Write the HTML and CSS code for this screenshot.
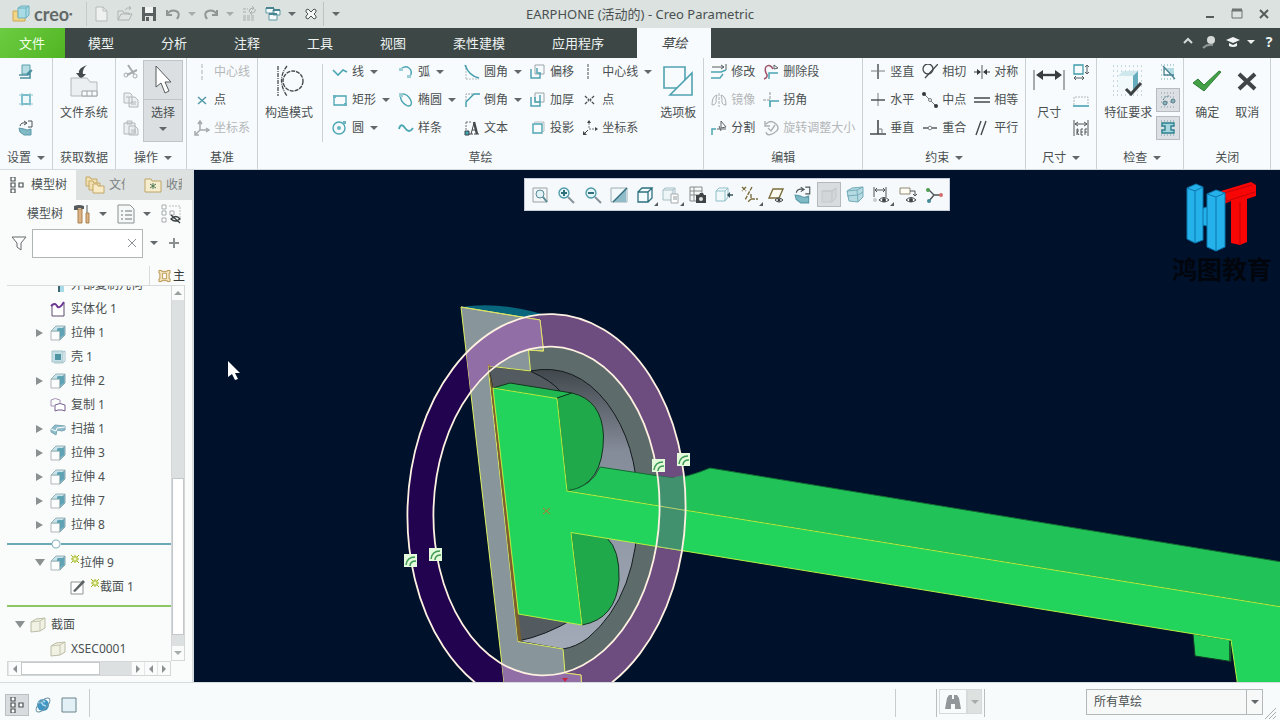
FILE: index.html
```html
<!DOCTYPE html>
<html lang="zh-CN">
<head>
    <meta charset="UTF-8">
    <meta name="viewport" content="width=device-width, initial-scale=1.0">
    <title>EARPHONE (活动的) - Creo Parametric</title>
    <link rel="stylesheet" href="styles.css">
</head>
<body>
    <!-- icon sprite -->
    <svg class="sprite" aria-hidden="true">
        <symbol id="i-new" viewBox="0 0 16 16"><path d="M3 1h7l4 4v10H3z" fill="#eef1f0" stroke="#b5bbb9"/><path d="M10 1v4h4" fill="none" stroke="#b5bbb9"/></symbol>
        <symbol id="i-open" viewBox="0 0 16 16"><path d="M1 14V5h5l1 2h5v2M1 14l3-6h11l-3 6z" fill="#dfe3e1" stroke="#adb3b1"/><path d="M8 4q2-3 6-2M12 0l2 2-2 2" fill="none" stroke="#adb3b1"/></symbol>
        <symbol id="i-save" viewBox="0 0 16 16"><path d="M1 1h14v14H1z" fill="#59605f"/><path d="M4 1h8v6H4z" fill="#f2f4f3"/><path d="M4 10h8v5H4z" fill="#dfe3e1"/><path d="M5 11h3v4H5z" fill="#59605f"/></symbol>
        <symbol id="i-undo" viewBox="0 0 16 16"><path d="M2 4v5h5M2 8q4-5 9-3t1 8" fill="none" stroke="#8f9694" stroke-width="2"/></symbol>
        <symbol id="i-redo" viewBox="0 0 16 16"><path d="M14 4v5H9M14 8q-4-5-9-3t-1 8" fill="none" stroke="#8f9694" stroke-width="2"/></symbol>
        <symbol id="i-regen" viewBox="0 0 16 16"><path d="M2 3h5M2 6h4M2 10h11M2 12h11M2 14h11" stroke="#a9afad" stroke-dasharray="3 1"/><path d="M8 6q0-4 4-4M11 0l2 2-2 2M14 3q1 4-4 4M11 5L9 7l2 2" fill="none" stroke="#a9afad"/></symbol>
        <symbol id="i-windows" viewBox="0 0 16 16"><path d="M1 2h8v5H1zM8 4h7v5H8zM4 8h8v6H4z" fill="#f4fafb" stroke="#5f99a4"/><path d="M1 2h8M8 4h7M4 8h8" stroke="#4a8491" stroke-width="2"/></symbol>
        <symbol id="i-closewin" viewBox="0 0 16 16"><path d="M3 4l2-1 3 3 3-3 2 1v2l-2 2 2 2v2l-2 1-3-3-3 3-2-1v-2l2-2-2-2z" fill="#f4f6f5" stroke="#4d5453"/></symbol>

        <symbol id="i-setup" viewBox="0 0 16 16"><path d="M4 1h8v9H4z" fill="#b7dce4" stroke="#5b9fad"/><path d="M1 11h9l4-5M2 14h10V9M13 6l-4 4" fill="none" stroke="#4b90a0" stroke-width="1.6"/></symbol>
        <symbol id="i-refs" viewBox="0 0 16 16"><path d="M4 3h8v9H4z" fill="#eef8fa" stroke="#45a4b5" stroke-width="1.4"/><path d="M1 3h14M1 12h14M4 1v13M12 1v13" stroke="#8fc6d1" stroke-dasharray="3 1"/></symbol>
        <symbol id="i-orient" viewBox="0 0 16 16"><path d="M2 6q1-4 6-3M6 1l3 2-3 2M10 1h4v6h-4" fill="none" stroke="#4b5556"/><path d="M1 8l5 1q3 2 7 0v6H6l-4-3z" fill="#7fb9c6" stroke="#5b9aa8"/></symbol>
        <symbol id="i-filesys" viewBox="0 0 32 32"><path d="M19 0q-9 3-8 8H8l5 6 5-5h-3q-1-5 4-9z" fill="#444b4b"/><path d="M3 13h16l3 4h7v14H3z" fill="#eceff1" stroke="#b1b7ba"/><path d="M14 26h15v5H14z" fill="#f8fafb" stroke="#9aa1a5"/><path d="M19 26v5M24 26v5" stroke="#9aa1a5"/></symbol>
        <symbol id="i-cut" viewBox="0 0 16 16"><path d="M5 1l6 9M14 6L4 11" stroke="#a6abad" stroke-width="2"/><circle cx="12" cy="12" r="2" fill="none" stroke="#a6abad"/><circle cx="3" cy="11" r="2" fill="none" stroke="#a6abad"/></symbol>
        <symbol id="i-copy" viewBox="0 0 16 16"><path d="M1 1h6l2 2v8H1zM6 5h6l3 3v7H6z" fill="#eceef0" stroke="#b3b8ba"/><path d="M8 10h5M8 12h5M3 5h3" stroke="#b3b8ba"/></symbol>
        <symbol id="i-paste" viewBox="0 0 16 16"><path d="M1 3h11v11H1zM4 1h5v3H4zM6 6h6l3 3v6H6z" fill="#eceef0" stroke="#b3b8ba"/><path d="M8 10h5M8 12h5" stroke="#b3b8ba"/></symbol>
        <symbol id="i-cursor" viewBox="0 0 16 30"><path d="M1 1v21l5-4 4 10 4-2-4-9h6z" fill="#fff" stroke="#555b5c"/></symbol>
        <symbol id="i-axis-d" viewBox="0 0 16 16"><path d="M8 0v16" stroke="#aeb3b5" stroke-dasharray="4 2"/></symbol>
        <symbol id="i-axis" viewBox="0 0 16 16"><path d="M6 0v16" stroke="#4a5051" stroke-dasharray="3 1"/></symbol>
        <symbol id="i-pt-teal" viewBox="0 0 16 16"><path d="M4 5l8 7M12 5l-8 7" stroke="#4f9aa8" stroke-width="1.5"/></symbol>
        <symbol id="i-pt" viewBox="0 0 16 16"><path d="M3 4l4 4M12 4L8 8M3 12l4-4M12 12L8 8" stroke="#4a5051" stroke-width="1.4" stroke-dasharray="3 1"/></symbol>
        <symbol id="i-csys-d" viewBox="0 0 16 16"><path d="M6 2v8h9M6 10l-4 4M4 4l2-3 2 3M12 8l3 2-3 2M1 11v4h4" fill="none" stroke="#a6abad" stroke-width="1.5"/></symbol>
        <symbol id="i-csys" viewBox="0 0 16 16"><path d="M7 3v6h6" fill="none" stroke="#70777a" stroke-dasharray="2 1"/><path d="M6 10l-4 4" stroke="#3e4445"/><path d="M5 3l2-3 2 3zM13 7l3 2-3 2zM1 11v4h4z" fill="#3e4445"/></symbol>
        <symbol id="i-constr" viewBox="0 0 32 32"><path d="M5 1v30M14 1Q3 15 14 31" fill="none" stroke="#454b4c" stroke-width="1.3" stroke-dasharray="4 1 1 1"/><circle cx="20" cy="16" r="10" fill="none" stroke="#454b4c" stroke-width="1.4" stroke-dasharray="4 1"/></symbol>
        <symbol id="i-line" viewBox="0 0 16 16"><path d="M1 6l5 5 5-5 4 2" fill="none" stroke="#4aa5b3" stroke-width="1.6"/></symbol>
        <symbol id="i-rect" viewBox="0 0 16 16"><path d="M2 4h12v9H2z" fill="none" stroke="#4aa5b3" stroke-width="1.3"/><path d="M1 3h3v3H1zM12 11h3v3h-3z" fill="#6bb5c1"/></symbol>
        <symbol id="i-circle" viewBox="0 0 16 16"><circle cx="7" cy="8" r="6" fill="none" stroke="#4aa5b3" stroke-width="1.4"/><circle cx="7" cy="8" r="2" fill="#6bb5c1"/><path d="M11 1h3v3h-3z" fill="#6bb5c1"/></symbol>
        <symbol id="i-arc" viewBox="0 0 16 16"><path d="M3 5q4-4 8-1t1 9" fill="none" stroke="#4aa5b3" stroke-width="1.4"/><path d="M1 4h4v3H1zM9 11h4v3H9z" fill="#9dced6"/></symbol>
        <symbol id="i-ellipse" viewBox="0 0 16 16"><ellipse cx="8" cy="8" rx="4" ry="7" transform="rotate(-40 8 8)" fill="none" stroke="#4aa5b3" stroke-width="1.4"/><path d="M1 1h4v4H1z" fill="#9dced6"/></symbol>
        <symbol id="i-spline" viewBox="0 0 16 16"><path d="M1 9q2-7 6-1t8 0" fill="none" stroke="#4aa5b3" stroke-width="1.8"/></symbol>
        <symbol id="i-fillet" viewBox="0 0 16 16"><path d="M2 1v14M2 15h13" stroke="#b3bcbf" stroke-dasharray="2 1"/><path d="M1 1q4 11 14 13" fill="none" stroke="#3f9bab" stroke-width="1.5"/></symbol>
        <symbol id="i-chamfer" viewBox="0 0 16 16"><path d="M2 9V2h7" fill="none" stroke="#9aa5a8" stroke-dasharray="2 1"/><path d="M2 15V10l8-8h6" fill="none" stroke="#3f9bab" stroke-width="1.4"/></symbol>
        <symbol id="i-text" viewBox="0 0 16 16"><path d="M2 2v9M2 2h6" fill="none" stroke="#6d7577" stroke-dasharray="2 1"/><path d="M1 11h4v4H1z" fill="#4aa5b3" stroke="#31444a"/><path d="M5 14h4M10 14h5M7 14l3-11M8 10h5" fill="none" stroke="#44494a"/><path d="M10 2l3 12" fill="none" stroke="#44494a" stroke-width="2.4"/></symbol>
        <symbol id="i-offset" viewBox="0 0 16 16"><path d="M5 1h9v9H5z" fill="none" stroke="#9aa5a8"/><path d="M1 5v9h9V9M7 4v5h4" fill="none" stroke="#4fa3b1" stroke-width="1.5"/></symbol>
        <symbol id="i-thicken" viewBox="0 0 16 16"><path d="M5 1h9v9H5z" fill="none" stroke="#9aa5a8"/><path d="M1 5v9h9V9M5 5v5h5V3" fill="none" stroke="#4fa3b1" stroke-width="1.5"/></symbol>
        <symbol id="i-project" viewBox="0 0 16 16"><path d="M3 4h9v9H3z" fill="none" stroke="#4aa5b3" stroke-width="1.4"/><path d="M3 4l2-2h9v9l-2 2M12 4l2-2" fill="none" stroke="#b6bfc2"/></symbol>
        <symbol id="i-palette" viewBox="0 0 32 32"><path d="M2 2h21v21H2z" fill="none" stroke="#4fa3b1" stroke-width="1.6"/><path d="M30 8v22H8z" fill="#f8fbfd" stroke="#4fa3b1" stroke-width="1.6"/></symbol>
        <symbol id="i-modify" viewBox="0 0 16 16"><path d="M1 3h12M10 1l3 2-3 2M15 0v6" fill="none" stroke="#555c5e"/><path d="M0 8h10l5-2M0 14h9l3-4" fill="none" stroke="#4aa5b3" stroke-width="1.4"/></symbol>
        <symbol id="i-mirror" viewBox="0 0 16 16"><path d="M8 1v14" stroke="#aab0b2" stroke-dasharray="3 1"/><path d="M6 3Q1 4 1 13q5 0 4-6zM10 3q5 1 5 10-5 0-4-6z" fill="none" stroke="#aab0b2"/></symbol>
        <symbol id="i-divide" viewBox="0 0 16 16"><path d="M1 15V9h4" fill="none" stroke="#4aa5b3" stroke-width="1.5"/><path d="M6 9h9M10 8V1l5 6zM8 6l2 5" fill="none" stroke="#5b6264"/></symbol>
        <symbol id="i-delseg" viewBox="0 0 16 16"><path d="M1 15q5-2 2-6-2-5 1-7t6 3" fill="none" stroke="#a0566a" stroke-width="1.5"/><path d="M6 15V9h9" fill="none" stroke="#4aa5b3" stroke-width="1.5"/><path d="M11 1l4 3-4 1z" fill="none" stroke="#5b6264"/></symbol>
        <symbol id="i-corner" viewBox="0 0 16 16"><path d="M0 8h7M7 0v8" stroke="#8d9597" stroke-dasharray="3 1"/><path d="M7 15V9h9" fill="none" stroke="#4aa5b3" stroke-width="1.7"/></symbol>
        <symbol id="i-rotate" viewBox="0 0 16 16"><path d="M3 4q5-5 10 0t-2 9-8-1M2 1v5h5M5 8l3 3 4-6" fill="none" stroke="#aab0b2" stroke-width="1.4"/></symbol>
        <symbol id="i-vert" viewBox="0 0 16 16"><path d="M8 0v15" stroke="#444a4b" stroke-width="1.4"/><path d="M1 7h14" stroke="#777e80"/></symbol>
        <symbol id="i-horiz" viewBox="0 0 16 16"><path d="M8 1v13" stroke="#777e80"/><path d="M1 8h14" stroke="#444a4b" stroke-width="1.4"/></symbol>
        <symbol id="i-perp" viewBox="0 0 16 16"><path d="M8 0v14M0 14h16" stroke="#444a4b" stroke-width="1.6"/><path d="M8 9h4v5" fill="none" stroke="#777e80"/></symbol>
        <symbol id="i-tangent" viewBox="0 0 16 16"><circle cx="6" cy="5" r="5" fill="none" stroke="#444a4b" stroke-width="1.3"/><path d="M3 14L16 0" stroke="#444a4b" stroke-width="1.3"/></symbol>
        <symbol id="i-mid" viewBox="0 0 16 16"><path d="M2 2l12 12" stroke="#777e80"/><circle cx="2" cy="2" r="2" fill="#33393a"/><circle cx="14" cy="14" r="2" fill="#33393a"/><circle cx="8" cy="8" r="1.5" fill="#fff" stroke="#777e80"/></symbol>
        <symbol id="i-coin" viewBox="0 0 16 16"><path d="M1 8h5M10 8h5" stroke="#555c5e" stroke-width="1.3"/><circle cx="8" cy="8" r="1.8" fill="#fff" stroke="#777e80"/></symbol>
        <symbol id="i-sym" viewBox="0 0 16 16"><path d="M8 1v14" stroke="#555c5e"/><path d="M0 8h3M13 8h3" stroke="#33393a"/><path d="M3 5l4 3-4 3zM13 5L9 8l4 3z" fill="#33393a"/></symbol>
        <symbol id="i-equal" viewBox="0 0 16 16"><path d="M0 6h16M0 10h16" stroke="#444a4b" stroke-width="1.4"/></symbol>
        <symbol id="i-para" viewBox="0 0 16 16"><path d="M2 15L7 1M7 15l5-14" stroke="#444a4b" stroke-width="1.4"/></symbol>
        <symbol id="i-dim" viewBox="0 0 32 32"><path d="M1 5v20M31 5v20" stroke="#555c5e"/><path d="M6 10h20" stroke="#383e3f" stroke-width="2.4"/><path d="M3 10l7-5v10zM29 10l-7-5v10z" fill="#383e3f"/></symbol>
        <symbol id="i-perim" viewBox="0 0 16 16"><path d="M1 1h9v9H1z" fill="none" stroke="#3f9bab" stroke-width="1.3"/><path d="M14 1v9M1 14h10M12 3l2-2 2 2M12 8l2 2 2-2M3 12l-2 2 2 2M9 12l2 2-2 2" fill="none" stroke="#555c5e"/></symbol>
        <symbol id="i-base" viewBox="0 0 16 16"><path d="M1 13V5h14v8" fill="none" stroke="#b0b7b9" stroke-dasharray="2 1"/><path d="M0 14h16" stroke="#6bb5c1" stroke-width="2"/></symbol>
        <symbol id="i-ref" viewBox="0 0 16 16"><path d="M1 0v16M15 0v16M2 4h12M5 2L2 4l3 2M11 2l3 2-3 2" fill="none" stroke="#4f5658"/><path d="M4 15V9h1v3H4l2 3M10 9H8v6h2M8 12h2M14 9h-2v6M12 12h2" fill="none" stroke="#4f5658"/></symbol>
        <symbol id="i-featreq" viewBox="0 0 32 32"><path d="M1 1h30M1 6h30M1 11h30M1 16h30M1 21h30M1 26h30M1 30h30" stroke="#93b6bf" stroke-dasharray="1 3"/><path d="M6 11h15v16H6z" fill="#f1f9fb"/><path d="M6 11l5-5h15l-5 5z" fill="#cfe8ee"/><path d="M21 11l5-5v16l-5 5z" fill="#68adbd"/><path d="M14 24l5 5 10-11" fill="none" stroke="#3c4243" stroke-width="3"/></symbol>
        <symbol id="i-overlap" viewBox="0 0 16 16"><path d="M1 1h14M1 6h14M1 11h14M1 15h14" stroke="#6aa5b2" stroke-dasharray="1 2"/><path d="M4 4h10v10z" fill="#b5dce4"/><path d="M4 3v8h10M3 2l12 13" fill="none" stroke="#4b8492" stroke-width="1.3"/></symbol>
        <symbol id="i-ends" viewBox="0 0 16 16"><path d="M1 1h14M1 5h14M1 10h14M1 15h14" stroke="#7f9ea6" stroke-dasharray="1 2"/><circle cx="5" cy="11" r="2" fill="#8fb5be" stroke="#527a85"/><circle cx="13" cy="9" r="2" fill="#8fb5be" stroke="#527a85"/><path d="M3 8q2-4 6-4" fill="none" stroke="#527a85" stroke-dasharray="2 1"/></symbol>
        <symbol id="i-shade" viewBox="0 0 16 16"><path d="M1 1h14M1 6h14M1 11h14M1 15h14" stroke="#6f959e" stroke-dasharray="1 2"/><path d="M2 3h12v3h-3v4h3v3H2v-3h3V6H2z" fill="#a8d6df" stroke="#2d8090" stroke-width="1.4"/></symbol>
        <symbol id="i-ok" viewBox="0 0 32 32"><path d="M2 18l5-4 6 6L28 6l2 1-17 19z" fill="#43a046" stroke="#2f7f37"/></symbol>
        <symbol id="i-cancel" viewBox="0 0 32 32"><path d="M8 9l16 15M24 9L8 24" stroke="#3f4546" stroke-width="4"/></symbol>

        <symbol id="i-tree" viewBox="0 0 16 16"><path d="M2 0h4v4H2zM2 6h4v4H2zM2 12h4v4H2zM10 6h4v4h-4z" fill="#fff" stroke="#4a5152" stroke-width="1.2"/></symbol>
        <symbol id="i-folders" viewBox="0 0 20 18"><path d="M1 1h4l1 2h6v7H1z" fill="#f1dfae" stroke="#c3a868"/><path d="M4 5h4l1 2h6v7H4z" fill="#f1dfae" stroke="#c3a868"/><path d="M8 8h4l1 2h6v7H8z" fill="#f8ebc6" stroke="#c3a868"/></symbol>
        <symbol id="i-fav" viewBox="0 0 18 16"><path d="M1 2h6l1 2h9v11H1z" fill="#f6edcf" stroke="#bda566"/><path d="M9 6v6M6 7l6 4M12 7l-6 4" stroke="#4f7a55"/></symbol>
        <symbol id="i-tools" viewBox="0 0 18 20"><path d="M1 2q5-2 10 0v3H8V4H5v2H1z" fill="#555b5c"/><path d="M5 5h4v14H5z" fill="#dcb384" stroke="#a9814f"/><path d="M14 1v9" stroke="#555b5c"/><path d="M13 9h3v10h-3z" fill="#dcb384" stroke="#a9814f"/></symbol>
        <symbol id="i-list" viewBox="0 0 18 20"><path d="M1 1h12l4 4v14H1z" fill="#f6f8f8" stroke="#8a9192"/><path d="M4 7h2M4 11h2M4 15h2M8 7h7M8 11h7M8 15h7" stroke="#6b7374"/></symbol>
        <symbol id="i-treeeye" viewBox="0 0 20 20"><path d="M1 1h4v4H1zM1 7h4v4H1zM1 14h4v4H1zM9 7h4v4H9z" fill="#fff" stroke="#a5abad"/><path d="M8 2h11v12" fill="none" stroke="#b8bdbf" stroke-dasharray="2 1"/><path d="M10 15q5-5 9 0-5 4-9 0zM10 11l9 8" fill="none" stroke="#3c4243" stroke-width="1.4"/></symbol>
        <symbol id="i-filter" viewBox="0 0 16 16"><path d="M1 2h14l-5 6v7l-4-3V8z" fill="#fff" stroke="#636a6b"/></symbol>
        <symbol id="i-main" viewBox="0 0 14 14"><path d="M1 1h3v1h6V1h3v3h-1v6h1v3h-3v-1H4v1H1v-3h1V4H1z" fill="#f4e6bd" stroke="#b4924d"/><path d="M5 4h4v6H5z" fill="#fff" stroke="#b4924d"/></symbol>
        <symbol id="i-extrude" viewBox="0 0 16 16"><path d="M1 6h9v9H1z" fill="#fcfdfd" stroke="#aeb6b9"/><path d="M1 6l5-5h9l-5 5z" fill="#c7e2e9" stroke="#9ab4bb"/><path d="M10 6l5-5v9l-5 5z" fill="#7cb6c5" stroke="#8aa9b1"/><path d="M7 4l1-1h6v7l-4 2V6H7z" fill="#5fa3b4"/></symbol>
        <symbol id="i-shell" viewBox="0 0 16 16"><path d="M2 2h11v11H2z" fill="#c4e0e6" stroke="#a5c4cb"/><path d="M13 3l2-1v10l-2 2H4" fill="none" stroke="#a3c1c8"/><path d="M5 5h6v6H5z" fill="#4f94a3"/></symbol>
        <symbol id="i-solid" viewBox="0 0 16 16"><path d="M2 15V4q4-3 5 1t7-3v13z" fill="#fff" stroke="#5c4d6d"/><path d="M1 5q4-4 6 0t7-4" fill="none" stroke="#6c3a94" stroke-width="2"/></symbol>
        <symbol id="i-dup" viewBox="0 0 16 16"><path d="M1 9V3q4-3 9 0v3M1 9h3" fill="none" stroke="#a892b8"/><path d="M5 14V8q5-3 10 0v6l-3-1H8z" fill="#fff" stroke="#77608c"/></symbol>
        <symbol id="i-sweep" viewBox="0 0 16 16"><path d="M1 8l4-4 10 1v4l-3 1-5-1-1 5-5-3z" fill="#8fbccb" stroke="#7ba6b4"/><path d="M1 8l5 2 1-3 8-1" fill="none" stroke="#fff"/></symbol>
        <symbol id="i-ext" viewBox="0 0 16 16"><path d="M10 8h4v7h-4z" fill="#a8dbe6"/><path d="M9 4v11" stroke="#3b6874" stroke-width="2"/></symbol>
        <symbol id="i-section" viewBox="0 0 16 16"><path d="M1 3h12v12H1z" fill="#fff" stroke="#8c9394"/><path d="M3 12L13 1l2 2L5 13z" fill="#5d6364"/></symbol>
        <symbol id="i-xsec" viewBox="0 0 16 16"><path d="M1 5l5-3 9-1v10l-5 3-9 1z" fill="#f1f1e4" stroke="#bbbca6"/><path d="M1 5l9-1 5-3M10 4v10" fill="none" stroke="#c5c6ae"/></symbol>
        <symbol id="i-new-mark" viewBox="0 0 8 8"><path d="M0 0l8 8M8 0L0 8M4 0v8M0 4h8" stroke="#9bb31c"/><path d="M2 2h4v4H2z" fill="#f4f7c0" stroke="#a9bd2e"/></symbol>

        <symbol id="g-refit" viewBox="0 0 18 18"><path d="M2 2h14v14H2z" fill="#f4f6f7" stroke="#9aa1a4"/><circle cx="9" cy="8" r="4" fill="#e3f2f5" stroke="#588b97"/><path d="M12 11l4 5" stroke="#588b97" stroke-width="2"/></symbol>
        <symbol id="g-zoomin" viewBox="0 0 18 18"><circle cx="7" cy="7" r="5" fill="#e3f5f7" stroke="#4a98a6" stroke-width="1.3"/><path d="M11 11l6 6" stroke="#84949a" stroke-width="2"/><path d="M4 7h6M7 4v6" stroke="#2f6f7c" stroke-width="2"/></symbol>
        <symbol id="g-zoomout" viewBox="0 0 18 18"><circle cx="7" cy="7" r="5" fill="#e3f5f7" stroke="#4a98a6" stroke-width="1.3"/><path d="M11 11l6 6" stroke="#84949a" stroke-width="2"/><path d="M4 7h6" stroke="#2f6f7c" stroke-width="2"/></symbol>
        <symbol id="g-repaint" viewBox="0 0 18 18"><path d="M1 2h16v14H1z" fill="#f2f7f9" stroke="#9cb0b6"/><path d="M16 2v14H3z" fill="#8fbcc8"/><path d="M3 16L17 2" stroke="#336f7e" stroke-width="1.5"/></symbol>
        <symbol id="g-style" viewBox="0 0 18 18"><path d="M2 6h10v10H2zM2 6l4-4h10l-4 4M16 2v10l-4 4" fill="#f3fafb" stroke="#2d7080" stroke-width="1.3"/></symbol>
        <symbol id="g-saved" viewBox="0 0 18 18"><path d="M1 4h10v10H1zM1 4l2-2h10l-2 2M13 2v6" fill="#eef5f7" stroke="#a5bfc6"/><path d="M9 8h7v9H9z" fill="#fff" stroke="#a3aaad"/><path d="M11 11h4M11 13h4" stroke="#8f979a"/></symbol>
        <symbol id="g-camera" viewBox="0 0 18 18"><path d="M1 1h12v14H1zM1 5h12M1 9h12M5 1v14" fill="#f6f7f7" stroke="#858b8d"/><path d="M7 9h3l1-2h3l1 2h2v8H7z" fill="#3e4445"/><circle cx="12" cy="13" r="2" fill="#dfe3e4"/></symbol>
        <symbol id="g-capture" viewBox="0 0 18 18"><path d="M1 5h9v10H1zM1 5l3-3h9l-3 3M13 2v9l-3 4" fill="#f0f8fa" stroke="#90c0ca"/><path d="M18 9h-5" stroke="#37525a" stroke-width="1.5"/><path d="M15 6l-3 3 3 3z" fill="#37525a"/></symbol>
        <symbol id="g-datum" viewBox="0 0 18 18"><path d="M1 1l4 4M5 1L1 5M11 1L4 14M10 8v5h7M10 13l-3 3" fill="none" stroke="#796d3c" stroke-width="1.4" stroke-dasharray="4 1"/></symbol>
        <symbol id="g-plane" viewBox="0 0 18 18"><path d="M6 3h10l-4 9H2z" fill="#fffdf2" stroke="#7c6c3b" stroke-width="1.4"/><path d="M8 14q4-4 8 0-4 4-8 0z" fill="#fff" stroke="#3d4344"/><circle cx="12" cy="14" r="1.5" fill="#3d4344"/></symbol>
        <symbol id="g-persp" viewBox="0 0 18 18"><path d="M2 5h10l4-3v10l-4 4H2z" fill="#d3d6d8" stroke="#c4c8ca"/><path d="M2 5h10v11M12 5l4-3" fill="none" stroke="#c1c6c8"/></symbol>
        <symbol id="g-clip" viewBox="0 0 18 18"><path d="M1 5l5-3 11-1v10l-5 5-9-1z" fill="#b6dae2" stroke="#73acb9"/><path d="M1 5l10-1 6-3M11 4l1 12M1 10l11-1 5-3" fill="none" stroke="#73acb9"/></symbol>
        <symbol id="g-dimview" viewBox="0 0 18 18"><path d="M2 1v10M14 1v10M3 4h10M5 2L3 4l2 2M11 2l2 2-2 2" fill="none" stroke="#4c5354"/><circle cx="3" cy="14" r="2" fill="#c7cccd"/><path d="M7 14q5-5 10 0-5 4-10 0z" fill="#fff" stroke="#3d4344"/><circle cx="12" cy="14" r="2" fill="#3d4344"/></symbol>
        <symbol id="g-note" viewBox="0 0 18 18"><path d="M1 2h10v6H1z" fill="#fffdf4" stroke="#8f8a74"/><path d="M11 5h5v4M14 8l2 2 2-2" fill="none" stroke="#4c5354"/><path d="M7 14q5-5 10 0-5 4-10 0z" fill="#fff" stroke="#3d4344"/><circle cx="12" cy="14" r="2" fill="#3d4344"/></symbol>
        <symbol id="g-spin" viewBox="0 0 18 18"><path d="M9 9L3 3M9 9h7M9 9l-5 6" stroke="#4c5354" stroke-width="1.4"/><circle cx="3" cy="4" r="2" fill="#4e9c53"/><circle cx="16" cy="9" r="2" fill="#d26c6c"/><circle cx="4" cy="15" r="2" fill="#438a98"/></symbol>
        <symbol id="i-globe" viewBox="0 0 18 18"><circle cx="9" cy="9" r="6" fill="#3f95c4"/><path d="M4 7q4-2 5 2l3 1M8 4l3 2" fill="none" stroke="#a9d8ee" stroke-width="1.6"/><ellipse cx="9" cy="9" rx="9" ry="4" transform="rotate(-45 9 9)" fill="none" stroke="#6f96a6"/></symbol>
        <symbol id="i-find" viewBox="0 0 18 18"><path d="M3 5l2-3h3v4h2V2h3l2 3 2 11h-6v-5H7v5H1z" fill="#92989a"/></symbol>
    </svg>

    <div class="app">
        <header class="titlebar">
            <div class="quick">
                <span class="brand">
                    <svg width="18" height="18" viewBox="0 0 18 18"><path d="M1 6h5v6h7v4H1z" fill="#f3d58a" stroke="#d0a84e"/><path d="M6 3l3-2h8v9l-3 3H6z" fill="#a9dbe6" stroke="#6db0bd"/><path d="M6 3h8v10M14 3l3-2" fill="none" stroke="#6db0bd"/></svg>
                    creo<sup>•</sup>
                </span>
                <button title="新建"><svg class="ico"><use href="#i-new"/></svg></button>
                <button title="打开"><svg class="ico"><use href="#i-open"/></svg></button>
                <button title="保存"><svg class="ico"><use href="#i-save"/></svg></button>
                <button title="撤消"><svg class="ico"><use href="#i-undo"/></svg></button>
                <button class="drop" title="撤消列表"><i class="caret off"></i></button>
                <button title="重做"><svg class="ico"><use href="#i-redo"/></svg></button>
                <button class="drop" title="重做列表"><i class="caret off"></i></button>
                <button title="重新生成"><svg class="ico"><use href="#i-regen"/></svg></button>
                <button title="窗口"><svg class="ico"><use href="#i-windows"/></svg></button>
                <button class="drop" title="窗口列表"><i class="caret"></i></button>
                <button title="关闭窗口"><svg class="ico"><use href="#i-closewin"/></svg></button>
                <button class="drop customize" title="自定义"><i class="caret"></i></button>
            </div>
            <h1>EARPHONE (活动的) - Creo Parametric</h1>
            <div class="win-buttons">
                <button title="最小化"><svg width="12" height="12"><path d="M2 9h8" stroke="#555c5b" stroke-width="2"/></svg></button>
                <button title="最大化"><svg width="12" height="12"><path d="M1 2h10v8H1z" fill="none" stroke="#6d7473"/><path d="M1 2h10" stroke="#6d7473" stroke-width="3"/></svg></button>
                <button title="关闭"><svg width="12" height="12"><path d="M2 2l8 8M10 2l-8 8" stroke="#555c5b" stroke-width="2"/></svg></button>
            </div>
        </header>

        <nav class="tabs">
            <a class="tab file" href="#">文件</a>
            <a class="tab" href="#">模型</a>
            <a class="tab" href="#">分析</a>
            <a class="tab" href="#">注释</a>
            <a class="tab" href="#">工具</a>
            <a class="tab" href="#">视图</a>
            <a class="tab" href="#">柔性建模</a>
            <a class="tab" href="#">应用程序</a>
            <a class="tab active" href="#">草绘</a>
            <div class="tab-tools">
                <button title="最小化功能区"><svg width="12" height="12"><path d="M2 7l4-4 4 4" fill="none" stroke="#d5dad9" stroke-width="2"/></svg></button>
                <button title="搜索"><svg width="16" height="16"><circle cx="9" cy="6" r="4" fill="#d5dad9"/><path d="M1 14q4-4 10-3" fill="none" stroke="#8d9594" stroke-width="2"/></svg></button>
                <button title="学习"><svg width="14" height="14"><path d="M0 5l7-3 7 3-7 3zM3 8v3q4 2 8 0V8L7 10z" fill="#f2f5f4"/></svg> <i class="caret light"></i></button>
                <button title="帮助">?</button>
            </div>
        </nav>

        <section class="ribbon">
            <div class="group">
                <div class="group-body">
                    <div class="tool-grid">
                        <button class="tool" title="草绘设置"><svg class="ico"><use href="#i-setup"/></svg></button>
                        <button class="tool" title="参考"><svg class="ico"><use href="#i-refs"/></svg></button>
                        <button class="tool" title="草绘视图"><svg class="ico"><use href="#i-orient"/></svg></button>
                    </div>
                </div>
                <button class="group-label">设置<i class="caret"></i></button>
            </div>
            <div class="group">
                <div class="group-body">
                    <button class="big"><svg class="ico32"><use href="#i-filesys"/></svg>文件系统</button>
                </div>
                <div class="group-label">获取数据</div>
            </div>
            <div class="group tight">
                <div class="group-body gap4">
                    <div class="tool-grid">
                        <button class="tool" title="剪切"><svg class="ico"><use href="#i-cut"/></svg></button>
                        <button class="tool" title="复制"><svg class="ico"><use href="#i-copy"/></svg></button>
                        <button class="tool" title="粘贴"><svg class="ico"><use href="#i-paste"/></svg></button>
                    </div>
                    <button class="select-btn">
                        <span class="select-top"><svg width="16" height="30"><use href="#i-cursor"/></svg></span>
                        <span class="select-text">选择</span>
                        <i class="caret"></i>
                    </button>
                </div>
                <button class="group-label">操作<i class="caret"></i></button>
            </div>
            <div class="group">
                <div class="group-body">
                    <div class="tool-grid">
                        <button class="tool" disabled><svg class="ico"><use href="#i-axis-d"/></svg>中心线</button>
                        <button class="tool"><svg class="ico"><use href="#i-pt-teal"/></svg>点</button>
                        <button class="tool" disabled><svg class="ico"><use href="#i-csys-d"/></svg>坐标系</button>
                    </div>
                </div>
                <div class="group-label">基准</div>
            </div>
            <div class="group">
                <div class="group-body">
                    <button class="big"><svg class="ico32"><use href="#i-constr"/></svg>构造模式</button>
                    <div class="rule"></div>
                    <div class="tool-grid">
                        <button class="tool"><svg class="ico"><use href="#i-line"/></svg>线<i class="caret"></i></button>
                        <button class="tool"><svg class="ico"><use href="#i-rect"/></svg>矩形<i class="caret"></i></button>
                        <button class="tool"><svg class="ico"><use href="#i-circle"/></svg>圆<i class="caret"></i></button>
                        <button class="tool"><svg class="ico"><use href="#i-arc"/></svg>弧<i class="caret"></i></button>
                        <button class="tool"><svg class="ico"><use href="#i-ellipse"/></svg>椭圆<i class="caret"></i></button>
                        <button class="tool"><svg class="ico"><use href="#i-spline"/></svg>样条</button>
                        <button class="tool"><svg class="ico"><use href="#i-fillet"/></svg>圆角<i class="caret"></i></button>
                        <button class="tool"><svg class="ico"><use href="#i-chamfer"/></svg>倒角<i class="caret"></i></button>
                        <button class="tool"><svg class="ico"><use href="#i-text"/></svg>文本</button>
                        <button class="tool"><svg class="ico"><use href="#i-offset"/></svg>偏移</button>
                        <button class="tool"><svg class="ico"><use href="#i-thicken"/></svg>加厚</button>
                        <button class="tool"><svg class="ico"><use href="#i-project"/></svg>投影</button>
                        <button class="tool"><svg class="ico"><use href="#i-axis"/></svg>中心线<i class="caret"></i></button>
                        <button class="tool"><svg class="ico"><use href="#i-pt"/></svg>点</button>
                        <button class="tool"><svg class="ico"><use href="#i-csys"/></svg>坐标系</button>
                    </div>
                    <button class="big after"><svg class="ico32"><use href="#i-palette"/></svg>选项板</button>
                </div>
                <div class="group-label">草绘</div>
            </div>
            <div class="group">
                <div class="group-body">
                    <div class="tool-grid">
                        <button class="tool"><svg class="ico"><use href="#i-modify"/></svg>修改</button>
                        <button class="tool" disabled><svg class="ico"><use href="#i-mirror"/></svg>镜像</button>
                        <button class="tool"><svg class="ico"><use href="#i-divide"/></svg>分割</button>
                        <button class="tool"><svg class="ico"><use href="#i-delseg"/></svg>删除段</button>
                        <button class="tool"><svg class="ico"><use href="#i-corner"/></svg>拐角</button>
                        <button class="tool" disabled><svg class="ico"><use href="#i-rotate"/></svg>旋转调整大小</button>
                    </div>
                </div>
                <div class="group-label">编辑</div>
            </div>
            <div class="group">
                <div class="group-body">
                    <div class="tool-grid">
                        <button class="tool"><svg class="ico"><use href="#i-vert"/></svg>竖直</button>
                        <button class="tool"><svg class="ico"><use href="#i-horiz"/></svg>水平</button>
                        <button class="tool"><svg class="ico"><use href="#i-perp"/></svg>垂直</button>
                        <button class="tool"><svg class="ico"><use href="#i-tangent"/></svg>相切</button>
                        <button class="tool"><svg class="ico"><use href="#i-mid"/></svg>中点</button>
                        <button class="tool"><svg class="ico"><use href="#i-coin"/></svg>重合</button>
                        <button class="tool"><svg class="ico"><use href="#i-sym"/></svg>对称</button>
                        <button class="tool"><svg class="ico"><use href="#i-equal"/></svg>相等</button>
                        <button class="tool"><svg class="ico"><use href="#i-para"/></svg>平行</button>
                    </div>
                </div>
                <button class="group-label">约束<i class="caret"></i></button>
            </div>
            <div class="group">
                <div class="group-body gap8">
                    <button class="big"><svg class="ico32"><use href="#i-dim"/></svg>尺寸</button>
                    <div class="tool-grid">
                        <button class="tool" title="周长"><svg class="ico"><use href="#i-perim"/></svg></button>
                        <button class="tool" title="基线"><svg class="ico"><use href="#i-base"/></svg></button>
                        <button class="tool" title="参考"><svg class="ico"><use href="#i-ref"/></svg></button>
                    </div>
                </div>
                <button class="group-label">尺寸<i class="caret"></i></button>
            </div>
            <div class="group tight">
                <div class="group-body gap4">
                    <button class="big"><svg class="ico32"><use href="#i-featreq"/></svg>特征要求</button>
                    <div class="tool-grid">
                        <button class="tool toggle" title="重叠几何"><svg class="ico"><use href="#i-overlap"/></svg></button>
                        <button class="tool toggle on" title="突出显示开放端"><svg class="ico"><use href="#i-ends"/></svg></button>
                        <button class="tool toggle on" title="着色封闭环"><svg class="ico"><use href="#i-shade"/></svg></button>
                    </div>
                </div>
                <button class="group-label">检查<i class="caret"></i></button>
            </div>
            <div class="group">
                <div class="group-body gap8">
                    <button class="big"><svg class="ico32"><use href="#i-ok"/></svg>确定</button>
                    <button class="big"><svg class="ico32"><use href="#i-cancel"/></svg>取消</button>
                </div>
                <div class="group-label">关闭</div>
            </div>
        </section>

        <main class="workspace">
            <aside class="navigator">
                <div class="nav-tabs">
                    <button class="nav-tab current"><svg class="ico"><use href="#i-tree"/></svg>模型树</button>
                    <button class="nav-tab"><svg width="20" height="18"><use href="#i-folders"/></svg><span class="cut-text">文件夹</span></button>
                    <button class="nav-tab"><svg width="18" height="16"><use href="#i-fav"/></svg><span class="cut-text">收藏夹</span></button>
                </div>
                <div class="tree-tools">
                    <span>模型树</span>
                    <button title="设置"><svg width="18" height="20"><use href="#i-tools"/></svg><i class="caret"></i></button>
                    <button title="显示"><svg width="18" height="20"><use href="#i-list"/></svg><i class="caret"></i></button>
                    <button title="树过滤器"><svg width="20" height="20"><use href="#i-treeeye"/></svg></button>
                </div>
                <div class="filter">
                    <svg class="ico"><use href="#i-filter"/></svg>
                    <div class="filter-box">
                        <input type="text" aria-label="过滤模型树">
                        <button title="清除"><svg width="8" height="8"><path d="M0 0l8 8M8 0L0 8" stroke="#8a9091"/></svg></button>
                    </div>
                    <button title="过滤选项"><i class="caret"></i></button>
                    <button title="添加"><svg width="12" height="12"><path d="M6 1v10M1 6h10" stroke="#8a9091" stroke-width="2"/></svg></button>
                </div>
                <div class="tree-head"><span><svg width="13" height="14"><use href="#i-main"/></svg>主</span></div>
                <div class="tree-area">
                    <ul class="tree">
                        <li><i class="tw"></i><svg class="ico"><use href="#i-ext"/></svg>外部复制几何</li>
                        <li><i class="tw"></i><svg class="ico"><use href="#i-solid"/></svg>实体化 1</li>
                        <li><i class="tw closed"></i><svg class="ico"><use href="#i-extrude"/></svg>拉伸 1</li>
                        <li><i class="tw"></i><svg class="ico"><use href="#i-shell"/></svg>壳 1</li>
                        <li><i class="tw closed"></i><svg class="ico"><use href="#i-extrude"/></svg>拉伸 2</li>
                        <li><i class="tw"></i><svg class="ico"><use href="#i-dup"/></svg>复制 1</li>
                        <li><i class="tw closed"></i><svg class="ico"><use href="#i-sweep"/></svg>扫描 1</li>
                        <li><i class="tw closed"></i><svg class="ico"><use href="#i-extrude"/></svg>拉伸 3</li>
                        <li><i class="tw closed"></i><svg class="ico"><use href="#i-extrude"/></svg>拉伸 4</li>
                        <li><i class="tw closed"></i><svg class="ico"><use href="#i-extrude"/></svg>拉伸 7</li>
                        <li><i class="tw closed"></i><svg class="ico"><use href="#i-extrude"/></svg>拉伸 8</li>
                        <li class="marker insert"><b></b></li>
                        <li><i class="tw opened"></i><svg class="ico"><use href="#i-extrude"/></svg><svg class="mark"><use href="#i-new-mark"/></svg>拉伸 9</li>
                        <li class="deep"><i class="tw"></i><svg class="ico"><use href="#i-section"/></svg><svg class="mark"><use href="#i-new-mark"/></svg>截面 1</li>
                        <li class="marker end"></li>
                        <li class="root"><i class="tw opened"></i><svg class="ico"><use href="#i-xsec"/></svg>截面</li>
                        <li><i class="tw"></i><svg class="ico"><use href="#i-xsec"/></svg>XSEC0001</li>
                    </ul>
                    <div class="vscroll">
                        <button title="向上"><i class="caret up"></i></button>
                        <div class="track"><div class="thumb"></div></div>
                        <button title="向下"><i class="caret off"></i></button>
                    </div>
                </div>
                <div class="hscroll">
                    <button title="向左"><i class="caret left"></i></button>
                    <div class="track"><div class="thumb"></div></div>
                    <button title="向右"><i class="caret right"></i></button>
                    <button title="向左"><i class="caret left"></i></button>
                    <button title="向右"><i class="caret right"></i></button>
                </div>
            </aside>

            <div class="viewport">
                <svg class="scene" viewBox="194 170 1086 512" preserveAspectRatio="xMidYMid slice">
                    <defs>
                        <linearGradient id="cavity" x1="0" y1="0" x2="0" y2="1">
                            <stop offset="0" stop-color="#3e4549"/>
                            <stop offset=".3" stop-color="#858c99"/>
                            <stop offset="1" stop-color="#a2aab8"/>
                        </linearGradient>
                        <path id="band" fill-rule="evenodd" clip-rule="evenodd" transform="rotate(2 546.5 511)" d="M407.5 511a139 197 0 1 0 278 0a139 197 0 1 0-278 0zM433.5 511a113 164.5 0 1 0 226 0a113 164.5 0 1 0-226 0z"/>
                        <clipPath id="clip-plate"><path d="M461 307l79 13 3.500 31-15-1 2 21-42.500-5L518 641.500l45 7.500 2 24 16 2 1 25H506z"/></clipPath>
                        <clipPath id="clip-right"><path d="M461 300h300v400H506z"/></clipPath>
                        <clipPath id="clip-stem"><path d="M566 491L600 467l72 11 38-10 570 94v121h-43l-6-43-660-107.500z"/></clipPath>
                        <clipPath id="clip-hole"><ellipse cx="546.500" cy="511" rx="113" ry="164.500" transform="rotate(2 546.5 511)"/></clipPath>
                    </defs>
                    <rect x="194" y="170" width="1086" height="512" fill="#00112c"/>
                    <path d="M461 307q38-6 84 8l-5 5z" fill="#07667c"/>
                    <!-- sketched ring and housing behind it -->
                    <use href="#band" fill="#21034f"/>
                    <g clip-path="url(#clip-right)">
                        <use href="#band" fill="#6d4c7f"/>
                        <path d="M488 300h200v400H506z" fill="#5e6b6b" clip-path="url(#clip-hole)"/>
                    </g>
                    <path d="M488 366l42 5q45-9 77 32 30 40 31 102 1 90-50 133-12 9-25 11l-45-8z" fill="url(#cavity)" stroke="#141a1e"/>
                    <path d="M488 366l42 5q22 10 30 20l-67-3zM518 641l-3-28 60 5q-30 18-57 23z" fill="#535b60" stroke="#141a1e"/>
                    <path d="M461 307l79 13 3.500 31-15-1 2 21-42.500-5L518 641.500l45 7.500 2 24 16 2 1 25H506z" fill="#88959b" stroke="#dff060"/>
                    <path d="M489 370l4 18 25.500 226 3 27-3.500 0z" fill="#79602e"/>
                    <path d="M493 388L518.500 614" stroke="#a0522b" stroke-width="2"/>
                    <!-- ear piece -->
                    <path d="M493 388l17-5 62 10-15 6z" fill="#20b850" stroke="#12351f"/>
                    <path d="M557 398l15-5q30 7 31.500 43 0 50-36.500 55z" fill="#20a94a" stroke="#12351f"/>
                    <path d="M571 532l36 6q13 12 12 42-3 39-37 45z" fill="#20a94a" stroke="#12351f"/>
                    <path d="M567 491q25-4 33-24l72 11q14 0 38-10l572 94v45z" fill="#21c358" stroke="#126a31"/>
                    <path d="M1193 634l2 22 36 5.500V640z" fill="#22cc58" stroke="#123b25"/>
                    <path d="M493 388l64 10.500 10 92.500L1282 607v80h-44l-7-47-660-107.500 11 92.500-63.500-11z" fill="#22d45c" stroke="#b6f240"/>
                    <path d="M1230 641v20" stroke="#14602c" stroke-width="2"/>
                    <use href="#band" fill="#926ea6" clip-path="url(#clip-plate)"/>
                    <use href="#band" fill="#41916f" clip-path="url(#clip-stem)"/>
                    <path d="M461 307l79 13 3.500 31-15-1M565 673l16 2 1 25" fill="none" stroke="#dfe06b"/>
                    <path d="M659 506l27 4.500M657 546.500l28 4.500" stroke="#b8d66b"/>
                    <use href="#band" fill="none" stroke="#fff1e2" stroke-width="1.800"/>
                    <path d="M543 508l7 6M550 508l-7 6M488 364l3 5" stroke="#b9722c"/>
                    <path d="M562 678h6l-3 4z" fill="#c42649"/>
                    <g transform="translate(652 459)"><path d="M0 0h13v13H0z" fill="#e3fadb"/><path d="M2 11q1-8 9-8M6 12q0-5 6-5" fill="none" stroke="#3e9a54" stroke-width="1.500"/></g>
                    <g transform="translate(677 453)"><path d="M0 0h13v13H0z" fill="#e3fadb"/><path d="M2 11q1-8 9-8M6 12q0-5 6-5" fill="none" stroke="#3e9a54" stroke-width="1.500"/></g>
                    <g transform="translate(429 548)"><path d="M0 0h13v13H0z" fill="#e3fadb"/><path d="M2 11q1-8 9-8M6 12q0-5 6-5" fill="none" stroke="#3e9a54" stroke-width="1.500"/></g>
                    <g transform="translate(404 554)"><path d="M0 0h13v13H0z" fill="#e3fadb"/><path d="M2 11q1-8 9-8M6 12q0-5 6-5" fill="none" stroke="#3e9a54" stroke-width="1.500"/></g>
                    <path d="M228 361v16l4-3 3 6 3-1-3-6h5z" fill="#fff"/>
                </svg>
                <div class="view-bar">
                    <button title="重新调整"><svg class="ico18"><use href="#g-refit"/></svg></button>
                    <button title="放大"><svg class="ico18"><use href="#g-zoomin"/></svg></button>
                    <button title="缩小"><svg class="ico18"><use href="#g-zoomout"/></svg></button>
                    <button title="重画"><svg class="ico18"><use href="#g-repaint"/></svg></button>
                    <button class="more" title="显示样式"><svg class="ico18"><use href="#g-style"/></svg></button>
                    <button class="more" title="已保存方向"><svg class="ico18"><use href="#g-saved"/></svg></button>
                    <button title="视图管理器"><svg class="ico18"><use href="#g-camera"/></svg></button>
                    <button title="视图法向"><svg class="ico18"><use href="#g-capture"/></svg></button>
                    <button class="more" title="基准显示"><svg class="ico18"><use href="#g-datum"/></svg></button>
                    <button title="平面显示"><svg class="ico18"><use href="#g-plane"/></svg></button>
                    <button title="草绘视图"><svg class="ico18"><use href="#i-orient"/></svg></button>
                    <button class="on" title="透视图"><svg class="ico18"><use href="#g-persp"/></svg></button>
                    <button title="修剪模型"><svg class="ico18"><use href="#g-clip"/></svg></button>
                    <button class="more" title="草绘器显示"><svg class="ico18"><use href="#g-dimview"/></svg></button>
                    <button title="注释显示"><svg class="ico18"><use href="#g-note"/></svg></button>
                    <button title="旋转中心"><svg class="ico18"><use href="#g-spin"/></svg></button>
                </div>
                <div class="watermark">
                    <svg width="74" height="72" viewBox="0 0 74 72">
                        <path d="M36 9L66 0l5 3v11l-9 3v43l-7 3-9-2V19l-7 3z" fill="#f80505"/>
                        <path d="M39 11l28-8M55 20v42M39 13l3 6 28-9" fill="none" stroke="#c10307"/>
                        <g fill="#25b1ea" stroke="#0b76ad" stroke-linejoin="round">
                            <path d="M9 29l13-4 9 3v13l-9 3-13-3z"/>
                            <path d="M2 6l9-4 7 3v53l-8 3-8-4z"/><path d="M2 6l8 3 8-4M10 9v51" fill="none"/>
                            <path d="M22 12l9-4 9 3v54l-9 4-9-4z"/><path d="M22 12l9 3 9-4M31 15v54" fill="none"/>
                        </g>
                    </svg>
                    <strong>鸿图教育</strong>
                </div>
            </div>
        </main>

        <footer class="status">
            <button class="on" title="模型树"><svg class="ico"><use href="#i-tree"/></svg></button>
            <button title="浏览器"><svg class="ico18"><use href="#i-globe"/></svg></button>
            <button title="全屏"><svg width="16" height="16"><path d="M1 1h14v14H1z" fill="#e3f1f6" stroke="#67828c"/></svg></button>
            <div class="message"></div>
            <div class="find">
                <button title="查找"><svg class="ico18"><use href="#i-find"/></svg></button>
                <button class="find-drop" title="查找选项"><i class="caret off"></i></button>
            </div>
            <div class="picker">
                <select aria-label="选择过滤器">
                    <option>所有草绘</option>
                </select>
                <span><i class="caret"></i></span>
            </div>
            <svg class="grip" width="14" height="14"><path d="M2 13L13 2M6 13l7-7M10 13l3-3" stroke="#a9afb0"/></svg>
        </footer>
    </div>
</body>
</html>
```
FILE: styles.css
```css
* { margin: 0; padding: 0; box-sizing: border-box; }
body { font-family: "Noto Sans", "Noto Sans CJK SC", sans-serif; font-size: 12px; line-height: 16px; color: #4a5051; background: #f8fbfc; }
button { font: inherit; color: inherit; background: none; border: none; display: flex; align-items: center; justify-content: center; white-space: nowrap; cursor: pointer; }
button:disabled { color: #b3b7b9; }
svg { display: block; flex: none; }
.sprite { position: absolute; width: 0; height: 0; }
.ico { width: 16px; height: 16px; }
.ico18 { width: 18px; height: 18px; }
.ico32 { width: 32px; height: 32px; }
.caret { display: inline-block; flex: none; border: 4px solid transparent; border-top: 4px solid #62686a; border-bottom: 0; }
.caret.off { border-top-color: #a6adab; }
.caret.light { border-top-color: #eef1f0; }
.caret.up { border-top: 0; border-bottom: 4px solid #9a9fa0; }
.caret.left { border: 4px solid transparent; border-right: 4px solid #8c9192; border-left: 0; }
.caret.right { border: 4px solid transparent; border-left: 4px solid #8c9192; border-right: 0; }

.app { display: grid; grid-template-rows: 28px 30px auto 1fr auto; height: 100vh; overflow: hidden; }

/* title bar */
.titlebar { display: grid; grid-template-columns: 1fr auto 1fr; align-items: center; background: #dbe2df; }
.titlebar h1 { font-size: 13px; font-weight: normal; }
.quick { display: flex; align-items: center; }
.quick button { width: 24px; height: 24px; }
.quick .drop { width: 14px; }
.quick .customize { width: 24px; border-left: 1px solid #bcc3c0; }
.brand { display: flex; align-items: center; gap: 4px; width: 87px; height: 24px; margin-right: 2px; padding-left: 12px; border-right: 1px solid #c3cac7; font-family: Lato, sans-serif; font-size: 18px; font-weight: bold; color: #626968; }
.brand sup { margin-left: -4px; font-size: 6px; }
.win-buttons { display: flex; justify-content: flex-end; padding-right: 3px; }
.win-buttons button { width: 27px; height: 24px; }

/* ribbon tabs */
.tabs { display: flex; background: #3d4846; color: #eef2f1; }
.tab { display: flex; align-items: center; margin-right: 1px; padding: 0 23px; font-size: 13px; color: inherit; text-decoration: none; }
.tab.file { margin: 0; padding: 0 20px 0 19px; background: #5cc02f; background: linear-gradient(135deg, #6dcc42, #50b522); color: #f2ffe9; }
.tab.active { margin-left: 9px; padding: 0 24px; background: #f8fbfd; color: #3f4546; font-style: italic; }
.tab-tools { display: flex; align-items: center; gap: 8px; margin-left: auto; padding: 0 5px 3px 0; font-weight: bold; font-size: 14px; }
.tab-tools button { min-width: 12px; gap: 7px; }

/* ribbon */
.ribbon { display: flex; background: #f8fbfd; border-bottom: 1px solid #d5dbdf; }
.group { display: flex; flex-direction: column; padding: 0 7px; border-right: 1px solid #ccd1d4; }
.group.tight { padding-right: 3px; }
.group-body { display: flex; justify-content: center; height: 84px; }
.gap4 { gap: 4px; }
.gap8 { gap: 8px; }
.group-label { display: flex; align-items: center; justify-content: center; gap: 6px; height: 27px; padding-top: 4px; }
.tool-grid { display: grid; grid-template-rows: repeat(3, 28px); grid-auto-flow: column; column-gap: 8px; justify-content: start; }
.tool { justify-content: flex-start; gap: 4px; }
.tool .caret { margin-left: 2px; }
.toggle { width: 24px; height: 24px; align-self: center; justify-content: center; border: 1px solid transparent; }
.toggle.on { background: #dcdfe3; border-color: #b7bcc1; }
.big { flex-direction: column; justify-content: flex-start; gap: 8px; min-width: 32px; padding-top: 7px; }
.big.after { margin-left: 8px; }
.rule { width: 1px; margin: 6px 9px 0; background: #ccd1d4; }
.select-btn { flex-direction: column; justify-content: flex-start; width: 40px; margin-top: 2px; background: #dcdfe2; border: 1px solid #bfc4c7; }
.select-top { display: flex; justify-content: center; align-items: center; width: 100%; height: 39px; border-bottom: 1px solid #bfc4c7; }
.select-text { padding: 5px 0 6px; }

/* model tree */
.workspace { display: flex; min-height: 0; }
.navigator { display: flex; flex-direction: column; flex: none; width: 194px; min-height: 0; background: #fafcfc; border-right: 2px solid #d8dde0; }
.nav-tabs { display: flex; height: 30px; background: #dde1e0; overflow: hidden; }
.nav-tab { gap: 4px; width: 58px; overflow: hidden; }
.nav-tab.current { width: 76px; gap: 6px; background: #fafcfc; }
.cut-text { width: 16px; overflow: hidden; color: #7a8081; }
.tree-tools { display: flex; align-items: center; gap: 10px; height: 28px; padding-left: 27px; }
.tree-tools button { gap: 8px; }
.filter { display: flex; align-items: center; gap: 5px; height: 30px; padding-left: 11px; }
.filter-box { display: flex; width: 111px; height: 29px; background: #fff; border: 1px solid #b0b5b6; }
.filter-box input { flex: 1; min-width: 0; border: 0; outline: 0; background: none; font: inherit; }
.filter-box button { width: 20px; }
.filter > button { width: 12px; }
.filter > button:last-child { margin-left: 3px; }
.tree-head { display: flex; justify-content: flex-end; height: 28px; margin: 0 7px; padding-top: 8px; border-bottom: 1px solid #d9dcdd; }
.tree-head span { display: flex; align-items: center; gap: 2px; padding-left: 8px; border-left: 1px solid #d9dcdd; color: #333839; }
.tree-area { display: flex; flex: 1; min-height: 0; margin: 0 7px; }
.tree { flex: 1; min-width: 0; margin-top: -13px; list-style: none; clip-path: inset(13px 0 0 0); }
.tree li { display: flex; align-items: center; gap: 5px; height: 24px; padding-left: 28px; white-space: nowrap; }
.tree li.root { padding-left: 8px; }
.tree li.deep { padding-left: 48px; }
.tree .mark { width: 8px; height: 8px; margin: -8px -4px 0 0; }
.tw { width: 10px; height: 8px; }
.tw.closed { border: 4px solid transparent; border-left: 7px solid #8b9091; border-right: 0; margin-left: 1px; margin-right: -1px; }
.tw.opened { border: 5px solid transparent; border-top: 7px solid #8b9091; border-bottom: 0; }
.tree li.marker { height: 14px; padding: 0; gap: 0; }
.marker::before { content: ""; flex: 1; height: 2px; background: #6ea9b6; }
.marker.end::before { background: #8cc665; }
.marker b { order: -1; width: 54px; height: 10px; background: radial-gradient(circle at 49px 5px, #fff 3px, #7fb0bb 4px, transparent 5px), linear-gradient(#6ea9b6, #6ea9b6) 0 4px / 45px 2px no-repeat; }
.vscroll { display: flex; flex-direction: column; width: 14px; border: 1px solid #d3d7d8; border-top: 0; }
.vscroll button { height: 14px; flex: none; }
.vscroll .track { display: flex; flex-direction: column; justify-content: flex-end; flex: 1; padding-bottom: 11px; background: #dde0e1; }
.vscroll .thumb { height: 47%; background: #fff; border: 1px solid #c4c8ca; }
.hscroll { display: flex; height: 15px; margin: 0 21px 6px 7px; border: 1px solid #d3d7d8; }
.hscroll button { width: 13px; border-left: 1px solid #e3e6e7; }
.hscroll .track { flex: 1; background: #dde0e1; }
.hscroll .thumb { width: 72%; height: 100%; background: #fff; border: 1px solid #c4c8ca; }

/* graphics window */
.viewport { position: relative; flex: 1; min-width: 0; background: #00112c; overflow: hidden; }
.scene { position: absolute; inset: 0; width: 100%; height: 100%; }
.view-bar { position: absolute; top: 8px; left: 50%; transform: translateX(-50%); display: flex; justify-content: space-between; width: 426px; padding: 3px; background: #f6f9fc; border: 1px solid #c6cdd9; }
.view-bar button { position: relative; width: 24px; height: 25px; border: 1px solid transparent; }
.view-bar .on { background: #d9dcdf; border-color: #b5babd; }
.more::after { content: ""; position: absolute; right: -2px; bottom: 0; border: 2px solid #555b5c; border-top-color: transparent; border-left-color: transparent; }
.watermark { position: absolute; top: 12px; right: 8px; display: flex; flex-direction: column; align-items: center; color: #02060c; }
.watermark strong { font-size: 25px; line-height: 30px; }

/* status bar */
.status { display: flex; align-items: center; height: 38px; padding: 6px 3px 0 5px; border-top: 1px solid #d5dbdf; background: #f8fbfc; }
.status > button { width: 24px; height: 22px; margin-right: 2px; border: 1px solid transparent; }
.status > .on { background: #d9dcde; border-color: #babfc1; }
.message { flex: 1; align-self: flex-start; height: 28px; margin: 0 40px 0 6px; border: 1px solid #c9cdcf; border-width: 0 1px; }
.find { display: flex; align-self: flex-start; height: 28px; padding: 0 2px 3px; border: 1px solid #b9bec0; border-width: 0 1px; }
.find button { width: 28px; border: 1px solid #d6dadb; }
.find .find-drop { width: 15px; background: #dde2e1; }
.picker { position: relative; align-self: flex-start; width: 177px; height: 26px; margin: 0 0 0 101px; }
.picker select { width: 100%; height: 100%; padding-left: 7px; appearance: none; font: inherit; color: inherit; background: #f7f9f9; border: 1px solid #b3b8b9; border-radius: 0; }
.picker span { position: absolute; top: 1px; right: 1px; bottom: 1px; display: flex; align-items: center; width: 16px; padding-left: 4px; border-left: 1px solid #b3b8b9; pointer-events: none; }
.grip { align-self: flex-end; }
```
